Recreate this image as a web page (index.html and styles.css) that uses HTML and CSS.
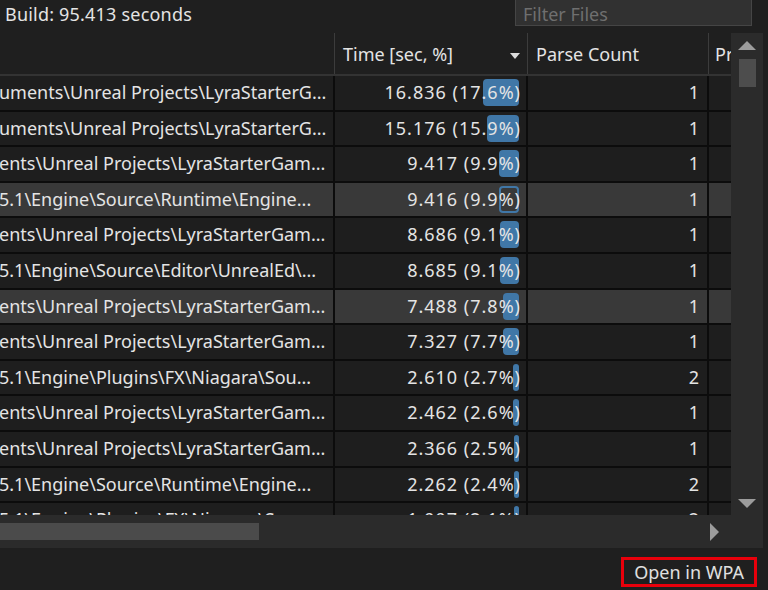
FILE: index.html
```html
<!DOCTYPE html>
<html>
	<head>
		<meta charset="UTF-8">
		<title>Build Files</title>
		<link rel="stylesheet" href="styles.css">
	</head>
	<body>
		<div class="topbar">
			<span class="title">Build: 95.413 seconds</span>
			<div class="filter">Filter Files</div>
		</div>
		<div class="panel">
			<div class="table">
				<div class="head">
					<div class="hcell c1"></div>
					<div class="hcell c2">Time [sec, %]<span class="sort"></span></div>
					<div class="hcell c3">Parse Count</div>
					<div class="hcell c4">Pr</div>
				</div>
				<div class="row">
					<div class="cell c1">uments\Unreal Projects\LyraStarterG...</div>
					<div class="cell c2"><span class="bar" style="width:36px"></span><span class="val">16.836 (17.6%)</span></div>
					<div class="cell c3">1</div>
					<div class="cell c4"></div>
				</div>
				<div class="row">
					<div class="cell c1">uments\Unreal Projects\LyraStarterG...</div>
					<div class="cell c2"><span class="bar" style="width:32px"></span><span class="val">15.176 (15.9%)</span></div>
					<div class="cell c3">1</div>
					<div class="cell c4"></div>
				</div>
				<div class="row">
					<div class="cell c1">ents\Unreal Projects\LyraStarterGam...</div>
					<div class="cell c2"><span class="bar" style="width:20px"></span><span class="val">9.417 (9.9%)</span></div>
					<div class="cell c3">1</div>
					<div class="cell c4"></div>
				</div>
				<div class="row hl">
					<div class="cell c1">5.1\Engine\Source\Runtime\Engine...</div>
					<div class="cell c2"><span class="bar outline" style="width:20px"></span><span class="val">9.416 (9.9%)</span></div>
					<div class="cell c3">1</div>
					<div class="cell c4"></div>
				</div>
				<div class="row">
					<div class="cell c1">ents\Unreal Projects\LyraStarterGam...</div>
					<div class="cell c2"><span class="bar" style="width:19px"></span><span class="val">8.686 (9.1%)</span></div>
					<div class="cell c3">1</div>
					<div class="cell c4"></div>
				</div>
				<div class="row">
					<div class="cell c1">5.1\Engine\Source\Editor\UnrealEd\...</div>
					<div class="cell c2"><span class="bar" style="width:19px"></span><span class="val">8.685 (9.1%)</span></div>
					<div class="cell c3">1</div>
					<div class="cell c4"></div>
				</div>
				<div class="row hl">
					<div class="cell c1">ents\Unreal Projects\LyraStarterGam...</div>
					<div class="cell c2"><span class="bar" style="width:16px"></span><span class="val">7.488 (7.8%)</span></div>
					<div class="cell c3">1</div>
					<div class="cell c4"></div>
				</div>
				<div class="row">
					<div class="cell c1">ents\Unreal Projects\LyraStarterGam...</div>
					<div class="cell c2"><span class="bar" style="width:16px"></span><span class="val">7.327 (7.7%)</span></div>
					<div class="cell c3">1</div>
					<div class="cell c4"></div>
				</div>
				<div class="row">
					<div class="cell c1">5.1\Engine\Plugins\FX\Niagara\Sou...</div>
					<div class="cell c2"><span class="bar" style="width:6px"></span><span class="val">2.610 (2.7%)</span></div>
					<div class="cell c3">2</div>
					<div class="cell c4"></div>
				</div>
				<div class="row">
					<div class="cell c1">ents\Unreal Projects\LyraStarterGam...</div>
					<div class="cell c2"><span class="bar" style="width:6px"></span><span class="val">2.462 (2.6%)</span></div>
					<div class="cell c3">1</div>
					<div class="cell c4"></div>
				</div>
				<div class="row">
					<div class="cell c1">ents\Unreal Projects\LyraStarterGam...</div>
					<div class="cell c2"><span class="bar" style="width:5px"></span><span class="val">2.366 (2.5%)</span></div>
					<div class="cell c3">1</div>
					<div class="cell c4"></div>
				</div>
				<div class="row">
					<div class="cell c1">5.1\Engine\Source\Runtime\Engine...</div>
					<div class="cell c2"><span class="bar" style="width:5px"></span><span class="val">2.262 (2.4%)</span></div>
					<div class="cell c3">2</div>
					<div class="cell c4"></div>
				</div>
				<div class="row">
					<div class="cell c1">5.1\Engine\Plugins\FX\Niagara\Sou...</div>
					<div class="cell c2"><span class="bar" style="width:5px"></span><span class="val">1.997 (2.1%)</span></div>
					<div class="cell c3">2</div>
					<div class="cell c4"></div>
				</div>
			</div>
			<div class="vscroll">
				<svg class="arrow" width="18" height="10" viewBox="0 0 18 10"><polygon points="0,10 9,1 18,10" fill="#9c9c9c"/></svg>
				<div class="vthumb"></div>
				<div class="vspace"></div>
				<svg class="arrow" width="18" height="10" viewBox="0 0 18 10"><polygon points="0,0 18,0 9,9" fill="#9c9c9c"/></svg>
			</div>
			<div class="hscroll">
				<div class="hthumb"></div>
				<svg class="harrow" width="9" height="18" viewBox="0 0 9 18"><polygon points="0,0 9,9 0,18" fill="#9c9c9c"/></svg>
			</div>
			<div class="corner"></div>
		</div>
		<div class="bottombar">
			<div class="wpa">Open in WPA</div>
		</div>
	</body>
</html>
```

FILE: styles.css
```css
*{
	margin: 0;
	padding: 0;
	box-sizing: border-box;
}
body{
	width: 768px;
	height: 590px;
	overflow: hidden;
	background-color: #1f1f1f;
	color: #e4e4e4;
	font: 18px "Noto Sans", "Open Sans", sans-serif;
}
.topbar{
	height: 33px;
	display: flex;
	align-items: flex-start;
}
.title{
	padding: 1px 0 0 5px;
	line-height: 26px;
	letter-spacing: 0.2px;
}
.filter{
	margin-left: auto;
	margin-right: 16px;
	width: 237px;
	height: 28px;
	margin-top: -2px;
	padding: 0 7px;
	line-height: 30px;
	background-color: #313131;
	border: 1px solid #454545;
	color: #6f6f6f;
}
.panel{
	display: grid;
	grid-template-columns: 731px 32px;
	grid-template-rows: 482px 33px;
	background-color: #2b2b2b;
	width: 763px;
}
.table{
	overflow: hidden;
	background-color: #0c0c0c;
}
.head{
	display: flex;
	height: 43px;
	background-color: #1f1f1f;
	border-bottom: 2px solid #333;
}
.hcell{
	display: flex;
	align-items: center;
	padding-left: 8px;
	border-right: 1px solid #3c3c3c;
	position: relative;
	flex-shrink: 0;
	white-space: nowrap;
	overflow: hidden;
}
.sort{
	position: absolute;
	right: 7px;
	top: 20px;
	border-left: 5px solid transparent;
	border-right: 5px solid transparent;
	border-top: 6px solid #dcdcdc;
}
.c1{ width: 335px; }
.c2{ width: 193px; }
.c3{ width: 181px; }
.c4{ width: 40px; }
.head .c4{ border-right: none; padding-left: 6px; }
.row{
	display: flex;
	height: 35.6px;
	border-bottom: 2px solid #0c0c0c;
}
.cell{
	background-color: #1e1e1e;
	border-right: 2px solid #0c0c0c;
	white-space: nowrap;
	overflow: hidden;
	line-height: 33px;
	flex-shrink: 0;
}
.row.hl .cell{
	background-color: #393939;
}
.cell.c1{
	text-indent: -1px;
}
.cell.c2{
	position: relative;
	text-align: right;
	padding-right: 6px;
}
.cell.c3{
	text-align: right;
	padding-right: 8px;
}
.val{
	position: relative;
	letter-spacing: 1px;
	margin-right: -1px;
}
.bar{
	position: absolute;
	right: 7px;
	top: 3px;
	height: 27px;
	border-radius: 4px;
	background-color: #4077a7;
}
.bar.outline{
	background-color: transparent;
	border: 2px solid #4077a7;
}
.vscroll{
	display: flex;
	flex-direction: column;
	align-items: center;
	padding: 7px 0 6px;
}
.vthumb{
	margin-top: 9px;
	width: 17px;
	height: 28px;
	background-color: #4d4d4d;
}
.vspace{
	flex: 1;
}
.hscroll{
	display: flex;
	align-items: center;
	padding-right: 12px;
}
.hthumb{
	width: 259px;
	height: 17px;
	background-color: #4b4b4b;
}
.harrow{
	margin-left: auto;
}
.bottombar{
	display: flex;
	justify-content: flex-end;
	padding: 9px 11px 0 0;
}
.wpa{
	border: 3px solid #e8000b;
	height: 30px;
	padding: 0 10px;
	line-height: 24px;
	color: #e0e0e0;
}
```
